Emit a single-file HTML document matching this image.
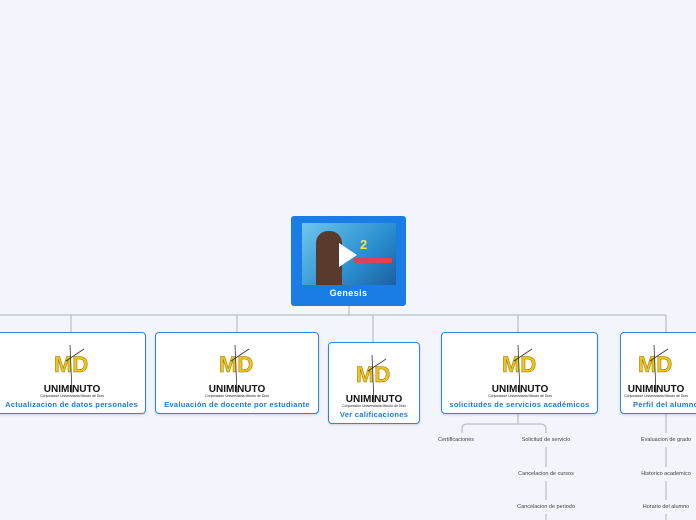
<!DOCTYPE html>
<html><head><style>
body{margin:0;width:696px;height:520px;background:#f2f5fc;position:relative;overflow:hidden;font-family:"Liberation Sans","DejaVu Sans",sans-serif}
.b{position:absolute;background:#fff;border:1.5px solid #2f86e6;border-radius:4px;box-sizing:border-box;box-shadow:0 1px 2px rgba(0,0,0,.15)}
.lbl{position:absolute;left:0;right:0;text-align:center;color:#1f78d8;font-weight:bold;font-size:7.5px;letter-spacing:.3px;white-space:nowrap}
.t{position:absolute;font-size:5.5px;color:#444;white-space:nowrap;transform:translateX(-50%)}
.logo{position:absolute;left:50%;width:80px;margin-left:-40px}
</style></head><body>
<svg width="696" height="520" style="position:absolute;left:0;top:0">
<g stroke="#b9bdc5" fill="none" stroke-width="1.2">
<path d="M0 315 H666"/>
<path d="M349 306 V315"/>
<path d="M71 315 V332 M237 315 V332 M373 315 V342 M518 315 V332 M666 315 V332"/>
<path d="M518 413 V424 M462 433 V429 Q462 424 467 424 H540 Q546 424 546 429 V433"/>
<path d="M546 447 V467 M546 481 V500 M546 514 V520"/>
<path d="M666 413 V433 M666 447 V467 M666 481 V500 M666 514 V520"/>
</g></svg>
<div style="position:absolute;left:291px;top:216px;width:115px;height:90px;background:#1a7de6;border-radius:3px">
<div style="position:absolute;left:11px;top:7px;width:94px;height:62px;background:linear-gradient(135deg,#6fc6ee,#2a8fd0 60%,#1b5fa0)">
<div style="position:absolute;left:14px;top:8px;width:26px;height:54px;background:#5a3a2a;border-radius:12px 12px 0 0"></div>
<div style="position:absolute;left:37px;top:20px;width:0;height:0;border-left:18px solid #fff;border-top:12px solid transparent;border-bottom:12px solid transparent"></div>
<div style="position:absolute;left:58px;top:14px;color:#f4e64a;font-weight:bold;font-size:13px">2</div>
<div style="position:absolute;left:52px;top:35px;width:38px;height:5px;background:#e04060"></div>
</div>
<div style="position:absolute;left:0;right:0;top:72px;text-align:center;color:#fff;font-weight:bold;font-size:9px;letter-spacing:.4px">Genesis</div>
</div>
<div class="b" style="left:-3px;top:332px;width:149px;height:82px">
<svg class="logo" style="top:8px" viewBox="0 0 80 60" height="60"><text x="22" y="31" font-size="22" font-weight="bold" fill="#f0c419" stroke="#8a7010" stroke-width=".5" font-family="Liberation Sans">MD</text><path d="M38 4 L40 52 M34 20 L52 8" stroke="#333" stroke-width=".8"/><text x="40" y="51" text-anchor="middle" font-size="10" font-weight="bold" fill="#111" font-family="Liberation Sans">UNIMINUTO</text><text x="40" y="56" text-anchor="middle" font-size="3.5" fill="#222" font-family="Liberation Sans">Corporación Universitaria Minuto de Dios</text></svg>
<div class="lbl" style="top:67px">Actualizacion de datos personales</div></div>
<div class="b" style="left:155px;top:332px;width:164px;height:82px">
<svg class="logo" style="top:8px" viewBox="0 0 80 60" height="60"><text x="22" y="31" font-size="22" font-weight="bold" fill="#f0c419" stroke="#8a7010" stroke-width=".5" font-family="Liberation Sans">MD</text><path d="M38 4 L40 52 M34 20 L52 8" stroke="#333" stroke-width=".8"/><text x="40" y="51" text-anchor="middle" font-size="10" font-weight="bold" fill="#111" font-family="Liberation Sans">UNIMINUTO</text><text x="40" y="56" text-anchor="middle" font-size="3.5" fill="#222" font-family="Liberation Sans">Corporación Universitaria Minuto de Dios</text></svg>
<div class="lbl" style="top:67px">Evaluación de docente por estudiante</div></div>
<div class="b" style="left:328px;top:342px;width:92px;height:82px">
<svg class="logo" style="top:8px" viewBox="0 0 80 60" height="60"><text x="22" y="31" font-size="22" font-weight="bold" fill="#f0c419" stroke="#8a7010" stroke-width=".5" font-family="Liberation Sans">MD</text><path d="M38 4 L40 52 M34 20 L52 8" stroke="#333" stroke-width=".8"/><text x="40" y="51" text-anchor="middle" font-size="10" font-weight="bold" fill="#111" font-family="Liberation Sans">UNIMINUTO</text><text x="40" y="56" text-anchor="middle" font-size="3.5" fill="#222" font-family="Liberation Sans">Corporación Universitaria Minuto de Dios</text></svg>
<div class="lbl" style="top:67px">Ver calificaciones</div></div>
<div class="b" style="left:441px;top:332px;width:157px;height:82px">
<svg class="logo" style="top:8px" viewBox="0 0 80 60" height="60"><text x="22" y="31" font-size="22" font-weight="bold" fill="#f0c419" stroke="#8a7010" stroke-width=".5" font-family="Liberation Sans">MD</text><path d="M38 4 L40 52 M34 20 L52 8" stroke="#333" stroke-width=".8"/><text x="40" y="51" text-anchor="middle" font-size="10" font-weight="bold" fill="#111" font-family="Liberation Sans">UNIMINUTO</text><text x="40" y="56" text-anchor="middle" font-size="3.5" fill="#222" font-family="Liberation Sans">Corporación Universitaria Minuto de Dios</text></svg>
<div class="lbl" style="top:67px">solicitudes de servicios académicos</div></div>
<div class="b" style="left:620px;top:332px;width:92px;height:82px">
<svg class="logo" style="top:8px;margin-left:-50px" viewBox="0 0 80 60" height="60"><text x="22" y="31" font-size="22" font-weight="bold" fill="#f0c419" stroke="#8a7010" stroke-width=".5" font-family="Liberation Sans">MD</text><path d="M38 4 L40 52 M34 20 L52 8" stroke="#333" stroke-width=".8"/><text x="40" y="51" text-anchor="middle" font-size="10" font-weight="bold" fill="#111" font-family="Liberation Sans">UNIMINUTO</text><text x="40" y="56" text-anchor="middle" font-size="3.5" fill="#222" font-family="Liberation Sans">Corporación Universitaria Minuto de Dios</text></svg>
<div class="lbl" style="top:67px;text-align:left;left:12px">Perfil del alumno</div></div>
<div class="t" style="left:456px;top:437px">Certificaciones</div>
<div class="t" style="left:546px;top:437px">Solicitud de servicio</div>
<div class="t" style="left:546px;top:471px">Cancelacion de cursos</div>
<div class="t" style="left:546px;top:504px">Cancelacion de periodo</div>
<div class="t" style="left:666px;top:437px">Evaluacion de grado</div>
<div class="t" style="left:666px;top:471px">Historico academico</div>
<div class="t" style="left:666px;top:504px">Horario del alumno</div>
</body></html>
